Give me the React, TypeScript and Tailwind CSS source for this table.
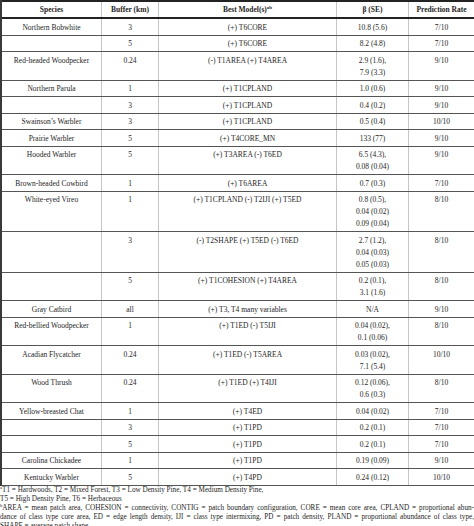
type Row = {
  species: string;
  buffer: string;
  model: string;
  beta: string[];
  rate: string;
};

const rows: Row[] = [
  { species: "Northern Bobwhite", buffer: "3", model: "(+) T6CORE", beta: ["10.8 (5.6)"], rate: "7/10" },
  { species: "", buffer: "5", model: "(+) T6CORE", beta: ["8.2 (4.8)"], rate: "7/10" },
  { species: "Red-headed Woodpecker", buffer: "0.24", model: "(-) T1AREA (+) T4AREA", beta: ["2.9 (1.6),", "7.9 (3.3)"], rate: "9/10" },
  { species: "Northern Parula", buffer: "1", model: "(+) T1CPLAND", beta: ["1.0 (0.6)"], rate: "9/10" },
  { species: "", buffer: "3", model: "(+) T1CPLAND", beta: ["0.4 (0.2)"], rate: "9/10" },
  { species: "Swainson’s Warbler", buffer: "3", model: "(+) T1CPLAND", beta: ["0.5 (0.4)"], rate: "10/10" },
  { species: "Prairie Warbler", buffer: "5", model: "(+) T4CORE_MN", beta: ["133 (77)"], rate: "9/10" },
  { species: "Hooded Warbler", buffer: "5", model: "(+) T3AREA (-) T6ED", beta: ["6.5 (4.3),", "0.08 (0.04)"], rate: "9/10" },
  { species: "Brown-headed Cowbird", buffer: "1", model: "(+) T6AREA", beta: ["0.7 (0.3)"], rate: "7/10" },
  { species: "White-eyed Vireo", buffer: "1", model: "(+) T1CPLAND (-) T2IJI (+) T5ED", beta: ["0.8 (0.5),", "0.04 (0.02)", "0.09 (0.04)"], rate: "8/10" },
  { species: "", buffer: "3", model: "(-) T2SHAPE (+) T5ED (-) T6ED", beta: ["2.7 (1.2),", "0.04 (0.03)", "0.05 (0.03)"], rate: "8/10" },
  { species: "", buffer: "5", model: "(+) T1COHESION (+) T4AREA", beta: ["0.2 (0.1),", "3.1 (1.6)"], rate: "8/10" },
  { species: "Gray Catbird", buffer: "all", model: "(+) T3, T4 many variables", beta: ["N/A"], rate: "9/10" },
  { species: "Red-bellied Woodpecker", buffer: "1", model: "(+) T1ED (-) T5IJI", beta: ["0.04 (0.02),", "0.1 (0.06)"], rate: "8/10" },
  { species: "Acadian Flycatcher", buffer: "0.24", model: "(+) T1ED (-) T5AREA", beta: ["0.03 (0.02),", "7.1 (5.4)"], rate: "10/10" },
  { species: "Wood Thrush", buffer: "0.24", model: "(+) T1ED (+) T4IJI", beta: ["0.12 (0.06),", "0.6 (0.3)"], rate: "8/10" },
  { species: "Yellow-breasted Chat", buffer: "1", model: "(+) T4ED", beta: ["0.04 (0.02)"], rate: "7/10" },
  { species: "", buffer: "3", model: "(+) T1PD", beta: ["0.2 (0.1)"], rate: "7/10" },
  { species: "", buffer: "5", model: "(+) T1PD", beta: ["0.2 (0.1)"], rate: "7/10" },
  { species: "Carolina Chickadee", buffer: "1", model: "(+) T1PD", beta: ["0.19 (0.09)"], rate: "9/10" },
  { species: "Kentucky Warbler", buffer: "5", model: "(+) T4PD", beta: ["0.24 (0.12)"], rate: "10/10" },
];

const cell = "align-top text-center px-1 pt-[2.5px] pb-[1px] border-b border-b-[#555] border-r border-r-[#c6c6c6]";
const head = "align-top text-center px-1 pt-[2px] pb-[1px] font-bold border-b-2 border-b-[#222] border-r border-r-[#c6c6c6]";

export default function App() {
  return (
    <div className="w-[474px] h-[526px] overflow-hidden bg-white text-[#1e1e1e] font-['Liberation_Serif','Times_New_Roman',serif] text-[7.5px] leading-[12px]">
      <div className="border-l-[2.5px] border-l-[#3a3a3a]">
        <table className="w-full table-fixed border-collapse border-t-2 border-t-[#222]">
          <colgroup>
            <col className="w-[99.5px]" />
            <col className="w-[57px]" />
            <col className="w-[178px]" />
            <col className="w-[72px]" />
            <col />
          </colgroup>
          <thead>
            <tr>
              <th className={head}>Species</th>
              <th className={head}>Buffer (km)</th>
              <th className={head}>
                Best Model(s)<sup className="text-[5px] top-[-0.6em]">ab</sup>
              </th>
              <th className={head}>β (SE)</th>
              <th className={head + " border-r-0"}>Prediction Rate</th>
            </tr>
          </thead>
          <tbody>
            {rows.map((r, i) => (
              <tr key={i}>
                <td className={cell}>{r.species}</td>
                <td className={cell}>{r.buffer}</td>
                <td className={cell}>{r.model}</td>
                <td className={cell}>
                  {r.beta.map((b, j) => (
                    <div key={j}>{b}</div>
                  ))}
                </td>
                <td className={cell + " border-r-0"}>{r.rate}</td>
              </tr>
            ))}
          </tbody>
        </table>
      </div>

      {/* footnotes */}
      <div className="text-[7.2px] leading-[9.1px]">
        <div>
          <sup className="text-[4.5px]">a</sup>T1 = Hardwoods, T2 = Mixed Forest, T3 = Low Density Pine, T4 = Medium Density Pine,
        </div>
        <div>T5 = High Density Pine, T6 = Herbaceous</div>
        <div className="text-justify [text-align-last:justify]">
          <sup className="text-[4.5px]">b</sup>AREA = mean patch area, COHESION = connectivity, CONTIG = patch boundary configuration, CORE = mean core area, CPLAND = proportional abun-
        </div>
        <div className="text-justify [text-align-last:justify]">
          dance of class type core area, ED = edge length density, IJI = class type intermixing, PD = patch density, PLAND = proportional abundance of class type,
        </div>
        <div>SHAPE = average patch shape</div>
      </div>
    </div>
  );
}
